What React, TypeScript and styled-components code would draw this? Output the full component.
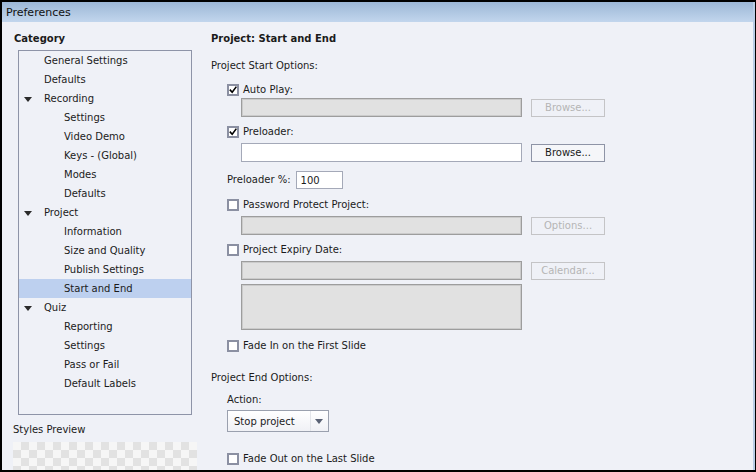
import styled, { createGlobalStyle } from 'styled-components';

const GlobalStyle = createGlobalStyle`
  html, body {
    margin: 0;
    padding: 0;
    background: #000;
  }
  body {
    font-family: "DejaVu Sans", "Liberation Sans", sans-serif;
    font-size: 10px;
    color: #1b1b1b;
  }
`;

const Frame = styled.div`
  width: 756px;
  height: 472px;
  padding: 2px 1px 2px 2px;
  box-sizing: border-box;
  background: #000;
  overflow: hidden;
`;

const Window = styled.div`
  display: flex;
  flex-direction: column;
  height: 468px;
  background: #eff1f7;
  border-right: 2px solid #b9cde6;
  overflow: hidden;
`;

const TitleBar = styled.div`
  height: 20px;
  display: flex;
  align-items: center;
  padding-left: 4px;
  background: linear-gradient(#9cb7d6, #c2d6ed);
  font-size: 11px;
  color: #111;
`;

const Body = styled.div`
  flex: 1;
  display: flex;
`;

const Sidebar = styled.aside`
  width: 209px;
  display: flex;
  flex-direction: column;
  padding: 10px 0 0 12px;
  box-sizing: border-box;
`;

const SideTitle = styled.div`
  font-weight: bold;
  line-height: 14px;
`;

const Tree = styled.div`
  margin: 4px 0 0 4px;
  width: 174px;
  height: 365px;
  box-sizing: border-box;
  border: 1px solid #8e94a8;
`;

const TreeRow = styled.div<{ $level: number; $selected?: boolean }>`
  position: relative;
  height: 19px;
  line-height: 19px;
  padding-left: ${(p) => (p.$level === 0 ? 25 : 45)}px;
  background: ${(p) => (p.$selected ? '#bdd0ef' : 'transparent')};
  white-space: nowrap;
`;

const Caret = styled.span`
  position: absolute;
  left: 5px;
  top: 8px;
  width: 0;
  height: 0;
  border-left: 4px solid transparent;
  border-right: 4px solid transparent;
  border-top: 5px solid #2b2b2b;
`;

const PreviewLabel = styled.div`
  margin-top: 8px;
  margin-left: -1px;
  line-height: 14px;
`;

const Checker = styled.div`
  margin: 5px 0 0 -1px;
  width: 184px;
  flex: 1;
  background-color: #f6f6f6;
  background-image:
    linear-gradient(45deg, #e2e2e2 25%, transparent 25%, transparent 75%, #e2e2e2 75%),
    linear-gradient(45deg, #e2e2e2 25%, transparent 25%, transparent 75%, #e2e2e2 75%);
  background-size: 16px 16px;
  background-position: 0 0, 8px 8px;
`;

const Main = styled.main`
  flex: 1;
  display: flex;
  flex-direction: column;
  padding-top: 9px;
`;

const Heading = styled.div`
  font-weight: bold;
  line-height: 16px;
`;

const Line = styled.div<{ $top: number; $indent?: number; $gap?: number }>`
  display: flex;
  align-items: center;
  gap: ${(p) => p.$gap ?? 9}px;
  margin-top: ${(p) => p.$top}px;
  margin-left: ${(p) => p.$indent ?? 0}px;
  min-height: 16px;
`;

const Label = styled.span`
  line-height: 16px;
  white-space: nowrap;
`;

const Box = styled.span`
  width: 12px;
  height: 12px;
  box-sizing: border-box;
  border: 2px solid #8b90a2;
  background: #fff;
  display: inline-flex;
  align-items: center;
  justify-content: center;
  margin-right: 4px;
`;

const CheckLabel = styled.label`
  display: flex;
  align-items: center;
  line-height: 16px;
`;

const Field = styled.div<{ $disabled?: boolean; $width?: number; $height?: number }>`
  width: ${(p) => p.$width ?? 281}px;
  height: ${(p) => p.$height ?? 19}px;
  box-sizing: border-box;
  background: ${(p) => (p.$disabled ? '#e1e1e1' : '#fff')};
  border: 1px solid ${(p) => (p.$disabled ? '#9d9d9d' : '#a4a9b8')};
  box-shadow: ${(p) => (p.$disabled ? 'inset 0 0 0 1px #cbcbcb' : 'none')};
  display: flex;
  align-items: center;
  padding-left: 4px;
`;

const Button = styled.div<{ $disabled?: boolean }>`
  width: 74px;
  height: 18px;
  box-sizing: border-box;
  border: 1px solid ${(p) => (p.$disabled ? '#c4c4c6' : '#8e94a6')};
  background: ${(p) => (p.$disabled ? 'transparent' : '#f5f6f9')};
  color: ${(p) => (p.$disabled ? '#b5b5b5' : '#1b1b1b')};
  display: flex;
  align-items: center;
  justify-content: center;
`;

const Select = styled.div`
  width: 102px;
  height: 22px;
  box-sizing: border-box;
  border: 1px solid #9aa0ae;
  background: linear-gradient(#ffffff, #f0f1f5);
  display: flex;
  align-items: center;
  padding-left: 6px;
`;

const SelectText = styled.span`
  flex: 1;
`;

const SelectArrow = styled.span`
  width: 16px;
  height: 20px;
  border-left: 1px solid #e3e5ea;
  display: flex;
  align-items: center;
  justify-content: center;
  margin-right: 1px;

  &::after {
    content: '';
    border-left: 4px solid transparent;
    border-right: 4px solid transparent;
    border-top: 5px solid #5a6275;
  }
`;

const Check = ({ checked, label }: { checked?: boolean; label: string }) => (
  <CheckLabel>
    <Box>
      {checked && (
        <svg width="10" height="10" viewBox="0 0 10 10">
          <path d="M1 4.5 L4 7.8 L9.2 0.8" fill="none" stroke="#000" strokeWidth="2" />
        </svg>
      )}
    </Box>
    {label}
  </CheckLabel>
);

const tree: { label: string; level: number; open?: boolean; selected?: boolean }[] = [
  { label: 'General Settings', level: 0 },
  { label: 'Defaults', level: 0 },
  { label: 'Recording', level: 0, open: true },
  { label: 'Settings', level: 1 },
  { label: 'Video Demo', level: 1 },
  { label: 'Keys - (Global)', level: 1 },
  { label: 'Modes', level: 1 },
  { label: 'Defaults', level: 1 },
  { label: 'Project', level: 0, open: true },
  { label: 'Information', level: 1 },
  { label: 'Size and Quality', level: 1 },
  { label: 'Publish Settings', level: 1 },
  { label: 'Start and End', level: 1, selected: true },
  { label: 'Quiz', level: 0, open: true },
  { label: 'Reporting', level: 1 },
  { label: 'Settings', level: 1 },
  { label: 'Pass or Fail', level: 1 },
  { label: 'Default Labels', level: 1 },
];

export default function App() {
  return (
    <Frame>
      <GlobalStyle />
      <Window>
        <TitleBar>Preferences</TitleBar>
        <Body>
          <Sidebar>
            <SideTitle>Category</SideTitle>
            <Tree>
              {tree.map((item, i) => (
                <TreeRow key={i} $level={item.level} $selected={item.selected}>
                  {item.open && <Caret />}
                  {item.label}
                </TreeRow>
              ))}
            </Tree>
            <PreviewLabel>Styles Preview</PreviewLabel>
            <Checker />
          </Sidebar>

          <Main>
            <Heading>Project: Start and End</Heading>
            <Line $top={11}>
              <Label>Project Start Options:</Label>
            </Line>

            <Line $top={8} $indent={16}>
              <Check checked label="Auto Play:" />
            </Line>
            <Line $top={0} $indent={30}>
              <Field $disabled />
              <Button $disabled>Browse...</Button>
            </Line>

            <Line $top={7} $indent={16}>
              <Check checked label="Preloader:" />
            </Line>
            <Line $top={3} $indent={30}>
              <Field />
              <Button>Browse...</Button>
            </Line>

            <Line $top={9} $indent={16} $gap={5}>
              <Label>Preloader %:</Label>
              <Field $width={47} $height={18}>100</Field>
            </Line>

            <Line $top={8} $indent={16}>
              <Check label="Password Protect Project:" />
            </Line>
            <Line $top={3} $indent={30}>
              <Field $disabled />
              <Button $disabled>Options...</Button>
            </Line>

            <Line $top={7} $indent={16}>
              <Check label="Project Expiry Date:" />
            </Line>
            <Line $top={3} $indent={30}>
              <Field $disabled />
              <Button $disabled>Calendar...</Button>
            </Line>
            <Line $top={4} $indent={30}>
              <Field $disabled $height={46} />
            </Line>

            <Line $top={8} $indent={16}>
              <Check label="Fade In on the First Slide" />
            </Line>

            <Line $top={16}>
              <Label>Project End Options:</Label>
            </Line>
            <Line $top={6} $indent={16}>
              <Label>Action:</Label>
            </Line>
            <Line $top={2} $indent={16}>
              <Select>
                <SelectText>Stop project</SelectText>
                <SelectArrow />
              </Select>
            </Line>

            <Line $top={19} $indent={16}>
              <Check label="Fade Out on the Last Slide" />
            </Line>
          </Main>
        </Body>
      </Window>
    </Frame>
  );
}
